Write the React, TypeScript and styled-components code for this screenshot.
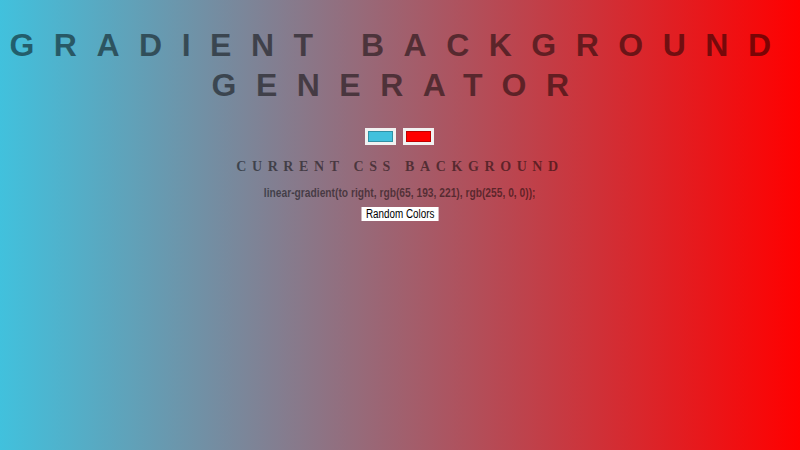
import { useState } from "react";
import styled, { createGlobalStyle } from "styled-components";

const GlobalStyle = createGlobalStyle<{ left: string; right: string }>`
  html, body {
    margin: 0;
    min-height: 100%;
  }
  body {
    min-height: 100vh;
    font-family: "Liberation Sans", Arial, sans-serif;
    background: linear-gradient(to right, ${(p) => p.left}, ${(p) => p.right});
  }
`;

const Page = styled.div`
  display: flex;
  flex-direction: column;
  align-items: center;
  text-align: center;
  color: rgba(0, 0, 0, 0.5);
`;

const Title = styled.h1`
  margin: 25px 0 0;
  font: bold 32px/40px "Liberation Sans", Arial, sans-serif;
  letter-spacing: 19.5px;
  text-transform: uppercase;
`;

const Pickers = styled.div`
  display: flex;
  gap: 7px;
  margin-top: 23px;
  margin-right: 2px;
`;

const ColorInput = styled.input`
  width: 31px;
  height: 17px;
  padding: 0;
  border: 2px solid #f1f1f1;
  background: #f1f1f1;
  cursor: pointer;
  &::-webkit-color-swatch-wrapper {
    padding: 1px;
  }
  &::-webkit-color-swatch {
    border: 1px solid rgba(0, 0, 0, 0.25);
  }
`;

const Subtitle = styled.h3`
  margin: 14px 0 0;
  font: bold 14px "Liberation Serif", "Times New Roman", serif;
  letter-spacing: 5.6px;
  text-transform: uppercase;
`;

/* condensed arial look: no narrow face installed, so squeeze horizontally */
const CssText = styled.p`
  margin: 11px 0 0;
  white-space: nowrap;
  font: bold 12.5px "Liberation Sans", Arial, sans-serif;
  transform: scaleX(0.82);
`;

const RandomButton = styled.button`
  margin-top: 7px;
  padding: 0 5.5px;
  border: none;
  background: #fff;
  color: #000;
  font: 12px "Liberation Sans", Arial, sans-serif;
  line-height: 14px;
  transform: scaleX(0.82);
  cursor: pointer;
`;

const toRgb = (hex: string) => {
  const n = parseInt(hex.slice(1), 16);
  return `rgb(${(n >> 16) & 255}, ${(n >> 8) & 255}, ${n & 255})`;
};

const randomHex = () =>
  "#" +
  Math.floor(Math.random() * 0xffffff)
    .toString(16)
    .padStart(6, "0");

function App() {
  const [left, setLeft] = useState("#41c1dd");
  const [right, setRight] = useState("#ff0000");
  const css = `linear-gradient(to right, ${toRgb(left)}, ${toRgb(right)});`;

  return (
    <Page>
      <GlobalStyle left={left} right={right} />
      <Title>Gradient Background Generator</Title>
      <Pickers>
        <ColorInput
          type="color"
          value={left}
          onChange={(e) => setLeft(e.target.value)}
        />
        <ColorInput
          type="color"
          value={right}
          onChange={(e) => setRight(e.target.value)}
        />
      </Pickers>
      <Subtitle>Current CSS Background</Subtitle>
      <CssText>{css}</CssText>
      <RandomButton
        onClick={() => {
          setLeft(randomHex());
          setRight(randomHex());
        }}
      >
        Random Colors
      </RandomButton>
    </Page>
  );
}

export default App;
